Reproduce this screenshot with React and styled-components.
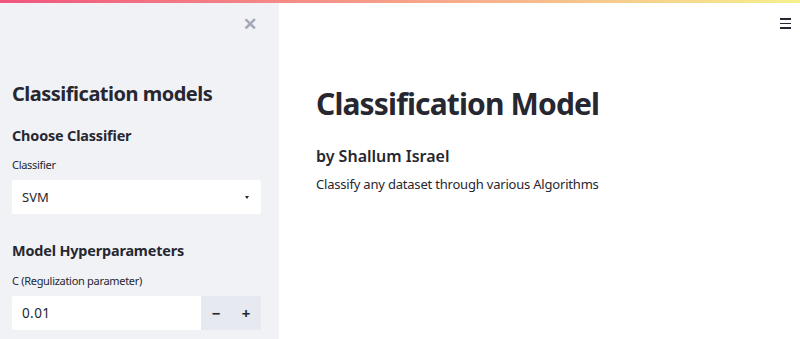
import React from "react";
import styled, { createGlobalStyle } from "styled-components";

const Global = createGlobalStyle`
  html, body { margin: 0; padding: 0; }
  body {
    font-family: "Noto Sans", "Open Sans", sans-serif;
    color: #262730;
    background: #ffffff;
    -webkit-font-smoothing: antialiased;
  }
  * { box-sizing: border-box; }
`;

const Page = styled.div`
  position: relative;
  display: flex;
  width: 800px;
  height: 339px;
  overflow: hidden;
`;

const Decoration = styled.div`
  position: absolute;
  top: 0;
  left: 0;
  right: 0;
  height: 3px;
  background: linear-gradient(90deg, #f0557e, #f7b08c 60%, #f6f08c);
  z-index: 2;
`;

const Sidebar = styled.aside`
  width: 279px;
  flex: none;
  background: #f0f2f6;
  padding: 0 18px 0 12px;
  display: flex;
  flex-direction: column;
`;

const CloseRow = styled.div`
  display: flex;
  justify-content: flex-end;
  height: 48px;
  padding-top: 16px;
  padding-right: 4px;
`;

const CloseBtn = styled.span`
  color: #a3a8b4;
  font-size: 17px;
  line-height: 16px;
  font-weight: 600;
`;

const SideTitle = styled.h2`
  margin: 32px 0 0;
  font-size: 20px;
  font-weight: 700;
  line-height: 28px;
  letter-spacing: -0.5px;
`;

const SideH3 = styled.h3`
  margin: ${(p) => p.$top}px 0 0;
  font-size: 14.4px;
  font-weight: 700;
  line-height: 22px;
  letter-spacing: -0.15px;
`;

const Label = styled.div`
  margin-top: ${(p) => p.$top}px;
  font-size: 11px;
  line-height: 14px;
  color: #262730;
  letter-spacing: -0.3px;
`;

const SelectBox = styled.div`
  margin-top: 8px;
  height: 34px;
  flex: none;
  background: #ffffff;
  border-radius: 2px;
  display: flex;
  align-items: center;
  justify-content: space-between;
  padding: 0 10px;
  font-size: 13px;
`;

const Caret = styled.span`
  width: 0;
  height: 0;
  border-left: 2.5px solid transparent;
  border-right: 2.5px solid transparent;
  border-top: 3px solid #262730;
  margin-right: 2px;
`;

const NumberRow = styled.div`
  margin-top: 8px;
  height: 34px;
  flex: none;
  display: flex;
  width: 249px;
`;

const NumberInput = styled.div`
  flex: 1;
  background: #ffffff;
  display: flex;
  align-items: center;
  padding: 0 10px;
  font-size: 13.5px;
  letter-spacing: 0.4px;
  border-radius: 2px 0 0 2px;
`;

const StepBtn = styled.span`
  width: 30px;
  background: #e6e9ef;
  display: flex;
  align-items: center;
  justify-content: center;
  font-size: 15px;
  font-weight: 700;
  color: #262730;
`;

const Main = styled.main`
  flex: 1;
  position: relative;
  padding: 85px 0 0 37px;
`;

const Hamburger = styled.div`
  position: absolute;
  top: 18px;
  right: 9px;
  width: 11px;
  display: flex;
  flex-direction: column;
  gap: 3px;
  & > span {
    height: 1.5px;
    background: #262730;
  }
`;

const Title = styled.h1`
  margin: 0;
  font-size: 30px;
  font-weight: 700;
  line-height: 38px;
  letter-spacing: -0.85px;
`;

const Subtitle = styled.h3`
  margin: 22px 0 0;
  font-size: 16px;
  font-weight: 600;
  line-height: 22px;
`;

const Para = styled.p`
  margin: 7px 0 0;
  font-size: 13px;
  line-height: 20px;
  letter-spacing: -0.2px;
`;

export default function App() {
  return (
    <>
      <Global />
      <Page>
        <Decoration />
        <Sidebar>
          <CloseRow>
            <CloseBtn>✕</CloseBtn>
          </CloseRow>
          <SideTitle>Classification models</SideTitle>
          <SideH3 $top={17}>Choose Classifier</SideH3>
          <Label $top={11}>Classifier</Label>
          <SelectBox>
            <span>SVM</span>
            <Caret />
          </SelectBox>
          <SideH3 $top={26}>Model Hyperparameters</SideH3>
          <Label $top={12}>C (Regulization parameter)</Label>
          <NumberRow>
            <NumberInput>0.01</NumberInput>
            <StepBtn>−</StepBtn>
            <StepBtn>+</StepBtn>
          </NumberRow>
        </Sidebar>
        <Main>
          <Hamburger>
            <span />
            <span />
            <span />
          </Hamburger>
          <Title>Classification Model</Title>
          <Subtitle>by Shallum Israel</Subtitle>
          <Para>Classify any dataset through various Algorithms</Para>
        </Main>
      </Page>
    </>
  );
}
